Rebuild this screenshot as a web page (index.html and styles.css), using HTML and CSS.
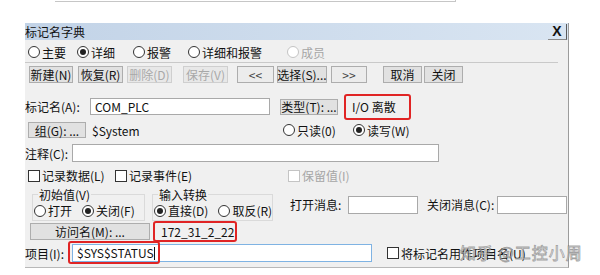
FILE: index.html
```html
<!DOCTYPE html>
<html lang="zh-CN">
<head>
  <meta charset="UTF-8" />
  <title>标记名字典</title>
  <link rel="stylesheet" href="styles.css">
</head>
<body>

  <div class="backdrop"></div>

  <div class="dialog">
    <div class="titlebar">
      <span class="title">标记名字典</span>
      <span class="close">X</span>
    </div>

    <!-- view tabs -->
    <div class="row tabs">
      <span class="radio"><i class="dot"></i>主要</span>
      <span class="radio on"><i class="dot"></i>详细</span>
      <span class="radio"><i class="dot"></i>报警</span>
      <span class="radio"><i class="dot"></i>详细和报警</span>
      <span class="radio off"><i class="dot"></i>成员</span>
    </div>
    <div class="sep"></div>

    <div class="row toolbar">
      <span class="btn b-new">新建(N)</span>
      <span class="btn b-undo">恢复(R)</span>
      <span class="btn b-del off">删除(D)</span>
      <span class="btn b-save off">保存(V)</span>
      <span class="btn b-prev">&lt;&lt;</span>
      <span class="btn b-pick">选择(S)...</span>
      <span class="btn b-next">&gt;&gt;</span>
      <span class="btn b-cancel">取消</span>
      <span class="btn b-close">关闭</span>
    </div>

    <div class="row r-name">
      <span class="label">标记名(A):</span>
      <span class="input w-name">COM_PLC</span>
      <span class="btn b-type">类型(T): ...</span>
      <span class="mark type-val">I/O 离散</span>
    </div>

    <div class="row r-group">
      <span class="btn b-group">组(G): ...</span>
      <span class="group-val">$System</span>
      <span class="radio ro"><i class="dot"></i>只读(0)</span>
      <span class="radio on"><i class="dot"></i>读写(W)</span>
    </div>

    <div class="row r-note">
      <span class="label short">注释(C):</span>
      <span class="input w-note"></span>
    </div>

    <div class="row r-checks">
      <span class="check c-data"><i class="box"></i>记录数据(L)</span>
      <span class="check c-event"><i class="box"></i>记录事件(E)</span>
      <span class="check off"><i class="box"></i>保留值(I)</span>
    </div>

    <div class="row r-groups">
      <fieldset class="gbox g-init">
        <legend>初始值(V)</legend>
        <span class="radio"><i class="dot"></i>打开</span>
        <span class="radio on"><i class="dot"></i>关闭(F)</span>
      </fieldset>
      <fieldset class="gbox g-conv">
        <legend>输入转换</legend>
        <span class="radio on"><i class="dot"></i>直接(D)</span>
        <span class="radio"><i class="dot"></i>取反(R)</span>
      </fieldset>
      <span class="msg-label m-open">打开消息:</span>
      <span class="input w-msg"></span>
      <span class="msg-label m-close">关闭消息(C):</span>
      <span class="input w-msg"></span>
    </div>

    <div class="row r-access">
      <span class="btn b-access">访问名(M): ...</span>
      <span class="mark access-val">172_31_2_22</span>
    </div>

    <div class="row r-item">
      <span class="label short">项目(I):</span>
      <span class="input w-item focus">$SYS$STATUS<i class="caret"></i><i class="mark item-mark"></i></span>
      <span class="check c-use"><i class="box"></i>将标记名用作项目名(U)</span>
    </div>
  </div>

  <div class="watermark">知乎 @工控小周</div>

</body>
</html>
```

FILE: styles.css
```css
* { margin: 0; padding: 0; box-sizing: border-box; }

body {
  font-family: "Noto Sans CJK SC", "Noto Sans", sans-serif;
  font-size: 12px;
  color: #111;
  background: #fff;
  width: 600px;
  height: 275px;
  overflow: hidden;
  position: relative;
}

i { font-style: normal; }

.backdrop {
  margin-left: 55px;
  width: 401px;
  height: 2px;
  border-bottom: 1px solid #c6c6c6;
  border-right: 1px solid #c6c6c6;
}

.dialog {
  margin: 21px 0 0 25px;
  width: 544px;
  height: 245px;
  background: #f0f0f0;
  border-right: 1px solid #9c9c9c;
  border-bottom: 1px solid #b8b8b8;
}

.titlebar {
  height: 17px;
  display: flex;
  justify-content: space-between;
  align-items: center;
  background: linear-gradient(to right, #c2d3e7, #d9e5f2);
}

.title { line-height: 17px; }

.close {
  width: 19px;
  height: 16px;
  margin-right: 1px;
  font-family: "Liberation Sans", sans-serif;
  font-weight: bold;
  font-size: 14px;
  line-height: 15px;
  text-align: center;
  border-right: 1px solid #5a5a5a;
  border-bottom: 1px solid #8a8a8a;
}

.row {
  display: flex;
  align-items: center;
}

/* radios + checks */
.radio, .check {
  display: flex;
  align-items: center;
  gap: 2px;
  white-space: nowrap;
}

.dot {
  width: 12px;
  height: 12px;
  border: 1px solid #333;
  border-radius: 50%;
  background: #fff;
  display: flex;
  align-items: center;
  justify-content: center;
}

.radio.on .dot::after {
  content: "";
  width: 6px;
  height: 6px;
  border-radius: 50%;
  background: #222;
}

.radio.off { color: #a6a6a6; }
.radio.off .dot { border-color: #c4c4c4; }

.box {
  width: 12px;
  height: 12px;
  border: 1px solid #333;
  background: #fff;
}

.check.off { color: #a6a6a6; }
.check.off .box { border-color: #c4c4c4; }

.tabs {
  margin-top: 3px;
  height: 18px;
  padding-left: 3px;
  display: grid;
  grid-template-columns: 49px 56px 55px 99px auto;
  align-items: center;
}

.sep {
  margin: 1px 10px 0 0;
  border-top: 1px solid #c9c9c9;
}

/* buttons */
.btn {
  height: 17px;
  display: flex;
  align-items: center;
  justify-content: center;
  background: #e1e1e1;
  border: 1px solid #adadad;
  white-space: nowrap;
}

.btn.off {
  color: #a8a8a8;
  background: #e8e8e8;
  border-color: #cfcfcf;
}

.toolbar {
  margin-top: 3px;
  height: 17px;
  padding-left: 4px;
}

.b-new { width: 44px; }
.b-undo { width: 45px; margin-left: 5px; }
.b-del { width: 45px; margin-left: 4px; }
.b-save { width: 45px; margin-left: 11px; }
.b-prev { width: 37px; margin-left: 9px; background: #ececec; color: #444; }
.b-pick { width: 50px; margin-left: 3px; }
.b-next { width: 36px; margin-left: 4px; background: #ececec; color: #444; }
.b-cancel { width: 39px; margin-left: 16px; }
.b-close { width: 39px; margin-left: 2px; }

/* text fields */
.input {
  height: 18px;
  background: #fff;
  border: 1px solid #a9a9a9;
  padding-left: 4px;
  line-height: 16px;
  white-space: nowrap;
}

.input.focus {
  border-color: #7fb3e3;
  position: relative;
}

.label { width: 65px; }
.label.short { width: 47px; }

.mark {
  border: 2px solid #e02424;
  border-radius: 3px;
}

.r-name { margin-top: 15px; height: 17px; }
.w-name { width: 180px; height: 17px; }
.b-type { width: 58px; height: 16px; margin-left: 10px; }
.type-val { width: 67px; height: 26px; margin-left: 6px; padding-left: 6px; line-height: 22px; }

.r-group { margin-top: 7px; height: 16px; }
.b-group { width: 58px; height: 16px; margin-left: 3px; }
.group-val { width: 191px; margin-left: 6px; }
.ro { width: 70px; }

.r-note { margin-top: 6px; height: 18px; }
.w-note { width: 367px; }

.r-checks { margin-top: 6px; height: 15px; padding-left: 3px; }
.c-data { width: 87px; }
.c-event { width: 173px; }

/* group boxes */
.r-groups { margin-top: 5px; height: 33px; }

.gbox {
  height: 33px;
  border: 1px solid #dadada;
  padding: 0 0 0 1px;
  display: flex;
  align-items: center;
  gap: 10px;
}

.gbox legend {
  margin-left: 4px;
  padding: 0 1px;
  line-height: 13px;
}

.g-init { width: 113px; margin-left: 7px; }
.g-conv { width: 118px; margin-left: 7px; }

.msg-label { white-space: nowrap; }
.m-open { margin-left: 17px; width: 58px; }
.m-close { margin-left: 9px; width: 70px; }
.w-msg { width: 70px; }

.r-access { margin-top: 2px; height: 17px; }
.b-access { width: 120px; margin-left: 5px; }
.access-val { width: 84px; height: 21px; margin-left: 3px; padding-left: 6px; line-height: 17px; }

.r-item { margin-top: 4px; height: 18px; }
.w-item { width: 300px; }

.caret {
  display: inline-block;
  width: 1px;
  height: 13px;
  background: #111;
  vertical-align: -2px;
}

.item-mark {
  position: absolute;
  left: -5px;
  top: -4px;
  width: 92px;
  height: 23px;
}

.c-use { margin-left: 15px; }

.watermark {
  position: absolute;
  left: 460px;
  top: 240px;
  font-size: 16px;
  letter-spacing: 1px;
  color: rgba(255, 255, 255, 0.65);
  -webkit-text-stroke: 0.8px rgba(100, 100, 100, 0.6);
}
```
